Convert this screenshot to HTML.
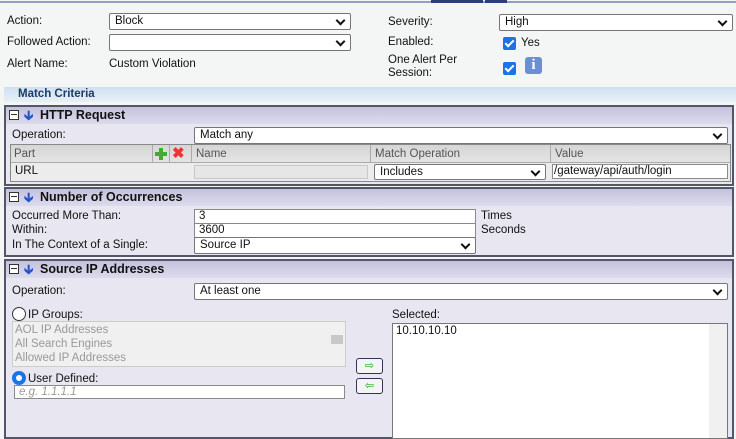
<!DOCTYPE html>
<html><head><meta charset="utf-8"><style>
*{box-sizing:border-box;margin:0;padding:0}
body{width:736px;height:437px;overflow:hidden;background:#f4f6f6;font-family:"Liberation Sans",Arial,sans-serif;font-size:11.5px;color:#111;position:relative}
.a{position:absolute;white-space:nowrap}
.sel{position:absolute;background:#fff;border:1px solid #767676;border-radius:2px;padding-left:5px;line-height:14px}
.sel::after{content:"";position:absolute;right:6px;top:3px;width:5px;height:5px;border-right:2px solid #111;border-bottom:2px solid #111;transform:rotate(45deg)}
.inp{position:absolute;background:#fff;border:1px solid #8a8a8a;padding-left:4px;line-height:12px}
.cb{position:absolute;width:13px;height:13px;background:#1a73e8;border-radius:2px}
.cb::after{content:"";position:absolute;left:4px;top:1px;width:3px;height:7px;border-right:2px solid #fff;border-bottom:2px solid #fff;transform:rotate(45deg)}
.panel{position:absolute;left:4px;width:730px;border:2px solid #55556a;background:#e7e6f1}
.hd{height:17px;background:linear-gradient(#c3c2dc,#dcdbec);position:relative;font-weight:bold;font-size:12.5px;line-height:17px;padding-left:34px}
.mn{position:absolute;left:3px;top:3px;width:10px;height:10px;border:1px solid #333;background:#fff}
.mn::after{content:"";position:absolute;left:1px;top:3px;width:6px;height:1px;background:#333}
.ar{position:absolute;left:18px;top:2px;color:#2255cc;font-size:13px;line-height:13px}
</style></head><body>
<div class="a" style="left:0;top:1px;width:736px;height:2px;background:#8fa0c4"></div>
<div class="a" style="left:431px;top:0;width:52px;height:3px;background:#2c3e7c"></div>
<div class="a" style="left:485px;top:0;width:22px;height:3px;background:#2c3e7c"></div>

<div class="a" style="left:7px;top:15px">Action:</div>
<div class="sel" style="left:109px;top:13px;width:242px;height:17px">Block</div>
<div class="a" style="left:7px;top:36px">Followed Action:</div>
<div class="sel" style="left:109px;top:34px;width:242px;height:17px"></div>
<div class="a" style="left:7px;top:58px">Alert Name:</div>
<div class="a" style="left:109px;top:58px">Custom Violation</div>

<div class="a" style="left:388px;top:16px">Severity:</div>
<div class="sel" style="left:499px;top:14px;width:234px;height:17px">High</div>
<div class="a" style="left:388px;top:36px">Enabled:</div>
<div class="cb" style="left:503px;top:37px"></div>
<div class="a" style="left:521px;top:37px">Yes</div>
<div class="a" style="left:388px;top:54px;line-height:13px">One Alert Per<br>Session:</div>
<div class="cb" style="left:503px;top:62px"></div>
<div class="a" style="left:525px;top:57px;width:17px;height:17px;background:#6b8fd6;border-radius:3px;color:#fff;font-weight:bold;font-family:'Liberation Serif',serif;font-size:15px;text-align:center;line-height:17px">i</div>

<div class="a" style="left:4px;top:87px;width:732px;height:15px;background:linear-gradient(#cfe0f0,#e8eff6);color:#1d3b66;font-weight:bold;font-size:11.5px;line-height:15px;padding-left:14px">Match Criteria</div>

<div class="panel" style="top:105px;height:81px">
 <div class="hd"><div class="mn"></div><div class="ar">&#x1F873;</div>HTTP Request</div>
 <div class="a" style="left:6px;top:22px">Operation:</div>
 <div class="sel" style="left:188px;top:20px;width:534px;height:17px">Match any</div>
 <div class="a" style="left:4px;top:37px;width:721px;height:38px;border:1px solid #888;background:#ececec"></div>
 <div class="a" style="left:5px;top:38px;width:719px;height:18px;background:linear-gradient(#d6d6d6,#e3e3e3);border-bottom:1px solid #aaa;color:#555;line-height:18px">
   <span class="a" style="left:3px">Part</span>
   <span class="a" style="left:141px;top:0;width:1px;height:18px;background:#aaa"></span>
   <span class="a" style="left:144px;top:3px;width:12px;height:12px"><span class="a" style="left:4px;top:0;width:4px;height:12px;background:#4a3"></span><span class="a" style="left:0;top:4px;width:12px;height:4px;background:#4a3"></span></span>
   <span class="a" style="left:158px;top:0;width:1px;height:18px;background:#aaa"></span>
   <span class="a" style="left:161px;top:0;color:#e33;font-weight:bold;font-size:15px;line-height:18px">&#x2716;</span>
   <span class="a" style="left:180px;top:0;width:1px;height:18px;background:#aaa"></span>
   <span class="a" style="left:185px">Name</span>
   <span class="a" style="left:359px;top:0;width:1px;height:18px;background:#aaa"></span>
   <span class="a" style="left:364px">Match Operation</span>
   <span class="a" style="left:539px;top:0;width:1px;height:18px;background:#aaa"></span>
   <span class="a" style="left:544px">Value</span>
 </div>
 <div class="a" style="left:9px;top:58px">URL</div>
 <div class="a" style="left:188px;top:58px;width:174px;height:14px;background:#e6e6e6;border:1px solid #c8c8c8"></div>
 <div class="sel" style="left:368px;top:57px;width:172px;height:16px">Includes</div>
 <div class="inp" style="left:546px;top:57px;width:176px;height:15px;padding-left:1px">/gateway/api/auth/login</div>
</div>

<div class="panel" style="top:187px;height:70px">
 <div class="hd"><div class="mn"></div><div class="ar">&#x1F873;</div>Number of Occurrences</div>
 <div class="a" style="left:6px;top:21px">Occurred More Than:</div>
 <div class="inp" style="left:188px;top:20px;width:282px;height:15px">3</div>
 <div class="a" style="left:475px;top:21px">Times</div>
 <div class="a" style="left:6px;top:35px">Within:</div>
 <div class="inp" style="left:188px;top:34px;width:282px;height:15px">3600</div>
 <div class="a" style="left:475px;top:35px">Seconds</div>
 <div class="a" style="left:6px;top:50px">In The Context of a Single:</div>
 <div class="sel" style="left:188px;top:48px;width:282px;height:17px">Source IP</div>
</div>

<div class="panel" style="top:259px;height:180px">
 <div class="hd"><div class="mn"></div><div class="ar">&#x1F873;</div>Source IP Addresses</div>
 <div class="a" style="left:6px;top:24px">Operation:</div>
 <div class="sel" style="left:188px;top:22px;width:534px;height:17px">At least one</div>
 <div class="a" style="left:6px;top:46px;width:14px;height:14px;border:1px solid #333;border-radius:50%;background:#fff"></div>
 <div class="a" style="left:22px;top:48px">IP Groups:</div>
 <div class="a" style="left:6px;top:60px;width:334px;height:46px;border:1px solid #ccc;background:#f0f0f0;color:#999;line-height:14px;padding:1px 2px">AOL IP Addresses<br>All Search Engines<br>Allowed IP Addresses</div>
 <div class="a" style="left:325px;top:74px;width:12px;height:9px;background:#c8c8c8"></div>
 <div class="a" style="left:6px;top:110px;width:14px;height:14px;border:4px solid #1a73e8;border-radius:50%;background:#fff"></div>
 <div class="a" style="left:22px;top:112px">User Defined:</div>
 <div class="inp" style="left:8px;top:124px;width:331px;height:14px;color:#999;font-style:italic;line-height:12px">e.g. 1.1.1.1</div>
 <div class="a" style="left:350px;top:97px;width:27px;height:16px;border:1px solid #335;border-radius:3px;background:#f4f4f4;color:#2a2;text-align:center;line-height:14px;font-size:11px">&#x21E8;</div>
 <div class="a" style="left:350px;top:117px;width:27px;height:16px;border:1px solid #335;border-radius:3px;background:#f4f4f4;color:#2a2;text-align:center;line-height:14px;font-size:11px">&#x21E6;</div>
 <div class="a" style="left:386px;top:48px">Selected:</div>
 <div class="a" style="left:386px;top:62px;width:336px;height:116px;border:1px solid #777;background:#fff;padding:1px 3px">10.10.10.10</div>
 <div class="a" style="left:703px;top:63px;width:18px;height:114px;background:#f0f0f0"></div>
</div>
</body></html>
